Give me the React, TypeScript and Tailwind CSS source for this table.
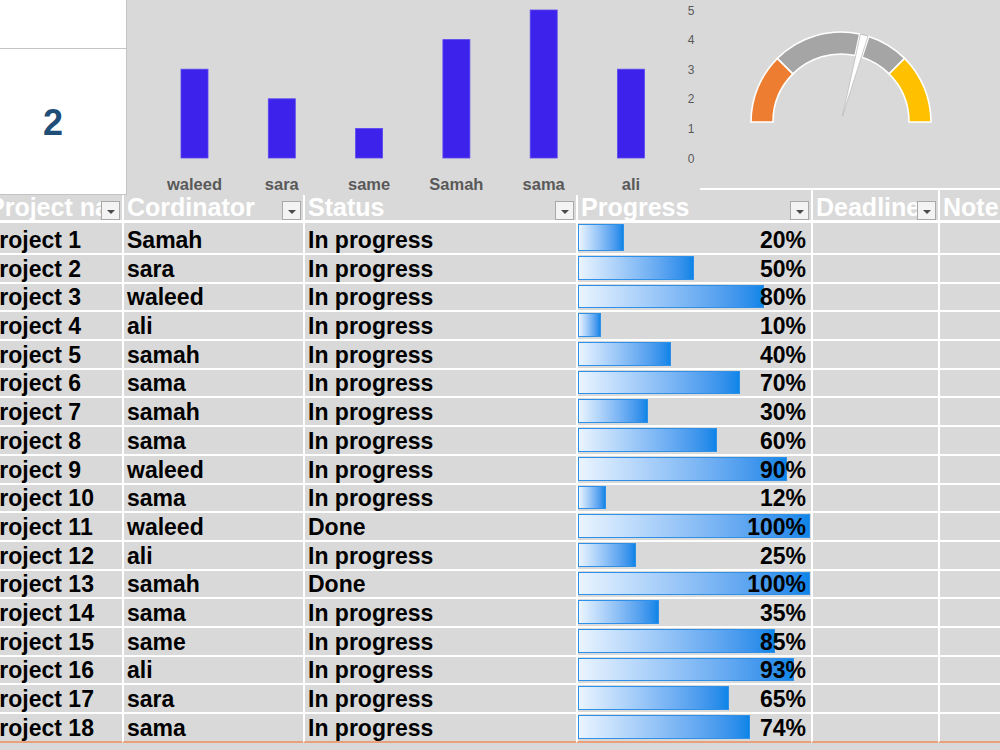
import React from "react";

type Row = { name: string; coord: string; status: string; p: number };

const rows: Row[] = [
  { name: "Project 1", coord: "Samah", status: "In progress", p: 20 },
  { name: "Project 2", coord: "sara", status: "In progress", p: 50 },
  { name: "Project 3", coord: "waleed", status: "In progress", p: 80 },
  { name: "Project 4", coord: "ali", status: "In progress", p: 10 },
  { name: "Project 5", coord: "samah", status: "In progress", p: 40 },
  { name: "Project 6", coord: "sama", status: "In progress", p: 70 },
  { name: "Project 7", coord: "samah", status: "In progress", p: 30 },
  { name: "Project 8", coord: "sama", status: "In progress", p: 60 },
  { name: "Project 9", coord: "waleed", status: "In progress", p: 90 },
  { name: "Project 10", coord: "sama", status: "In progress", p: 12 },
  { name: "Project 11", coord: "waleed", status: "Done", p: 100 },
  { name: "Project 12", coord: "ali", status: "In progress", p: 25 },
  { name: "Project 13", coord: "samah", status: "Done", p: 100 },
  { name: "Project 14", coord: "sama", status: "In progress", p: 35 },
  { name: "Project 15", coord: "same", status: "In progress", p: 85 },
  { name: "Project 16", coord: "ali", status: "In progress", p: 93 },
  { name: "Project 17", coord: "sara", status: "In progress", p: 65 },
  { name: "Project 18", coord: "sama", status: "In progress", p: 74 },
];

const chartData = [
  { label: "waleed", v: 3 },
  { label: "sara", v: 2 },
  { label: "same", v: 1 },
  { label: "Samah", v: 4 },
  { label: "sama", v: 5 },
  { label: "ali", v: 3 },
];

function BarChart() {
  const base = 158;
  const unit = 29.6;
  return (
    <svg width={573} height={195} viewBox="0 0 573 195" className="shrink-0">
      {chartData.map((d, i) => {
        const x = 54 + i * 87.3;
        const h = d.v * unit;
        return (
          <g key={d.label}>
            <rect x={x} y={base - h} width={27} height={h} fill="#3c22ea" stroke="#5a48f0" strokeWidth={0.8} />
            <text
              x={x + 13.5}
              y={190}
              textAnchor="middle"
              fontFamily="'Liberation Sans', Arial, sans-serif"
              fontWeight={700}
              fontSize={16.5}
              fill="#595959"
            >
              {d.label}
            </text>
          </g>
        );
      })}
      {[0, 1, 2, 3, 4, 5].map((n) => (
        <text
          key={n}
          x={564}
          y={base - n * unit + 4.5}
          textAnchor="middle"
          fontFamily="'Liberation Sans', Arial, sans-serif"
          fontSize={12}
          fill="#595959"
        >
          {n}
        </text>
      ))}
    </svg>
  );
}

function Gauge() {
  const cx = 141;
  const cy = 122;
  const R = 90;
  const r = 68;
  const pt = (rad: number, a: number) => {
    const t = (a * Math.PI) / 180;
    return `${(cx + rad * Math.cos(t)).toFixed(2)} ${(cy - rad * Math.sin(t)).toFixed(2)}`;
  };
  const seg = (a1: number, a2: number) =>
    `M ${pt(R, a1)} A ${R} ${R} 0 0 1 ${pt(R, a2)} L ${pt(r, a2)} A ${r} ${r} 0 0 0 ${pt(r, a1)} Z`;
  const t1 = (77.5 * Math.PI) / 180;
  const t2 = (72.5 * Math.PI) / 180;
  const needle = `M ${cx + 1.5} ${cy - 6} L ${(cx + R * Math.cos(t1)).toFixed(2)} ${(cy - R * Math.sin(t1)).toFixed(2)} L ${(cx + R * Math.cos(t2)).toFixed(2)} ${(cy - R * Math.sin(t2)).toFixed(2)} Z`;
  return (
    <svg width={300} height={188} viewBox="0 0 300 188">
      <path d={seg(180, 135)} fill="#ed7d31" stroke="#ffffff" strokeWidth={1.6} />
      <path d={seg(135, 78)} fill="#a5a5a5" stroke="#ffffff" strokeWidth={1.6} />
      <path d={seg(72, 45)} fill="#a5a5a5" stroke="#ffffff" strokeWidth={1.6} />
      <path d={seg(45, 0)} fill="#ffc000" stroke="#ffffff" strokeWidth={1.6} />
      <path d={needle} fill="#ffffff" stroke="#b8b8b8" strokeWidth={0.7} />
    </svg>
  );
}

function Drop() {
  return (
    <div className="w-[19px] h-[19px] mr-[2px] shrink-0 bg-[#f3f3f3] border border-[#a9a9a9] flex items-end justify-center pb-[5px]">
      <div className="w-0 h-0 border-l-[4px] border-r-[4px] border-t-[4px] border-l-transparent border-r-transparent border-t-[#4a4a4a]" />
    </div>
  );
}

const cols = "grid grid-cols-[122px_181px_273px_235px_127px_62px]";

function HeaderCell({ label, first, drop, shift }: { label: string; first?: boolean; drop?: boolean; shift?: boolean }) {
  return (
    <div className={`flex items-end overflow-hidden ${first ? "" : "border-l-2 border-white"}`}>
      <div className={`flex-1 min-w-0 overflow-hidden whitespace-nowrap text-white font-bold text-[25px] leading-[25px] ${shift ? "" : "pl-[3px]"}`}>
        <span className={shift ? "ml-[-12px]" : ""}>{label}</span>
      </div>
      {drop ? <Drop /> : null}
    </div>
  );
}

function DataRow({ row, index }: { row: Row; index: number }) {
  const last = index === rows.length - 1;
  const h = index === 0 ? "h-[32px]" : "h-[28.7px]";
  const bb = last ? "border-b-2 border-b-[#e9a17c]" : "border-b-2 border-b-white";
  const cell = `flex items-end overflow-hidden whitespace-nowrap ${bb}`;
  const txt = "text-[23px] leading-[26px] font-bold text-black";
  return (
    <div className={`${cols} ${h}`}>
      <div className={cell}>
        <span className={`${txt} ml-[-16px]`}>{row.name}</span>
      </div>
      <div className={`${cell} border-l-2 border-l-white pl-[3px]`}>
        <span className={txt}>{row.coord}</span>
      </div>
      <div className={`${cell} border-l-2 border-l-white pl-[3px]`}>
        <span className={txt}>{row.status}</span>
      </div>
      <div className={`${cell} border-l-2 border-l-white relative justify-end pr-[5px]`}>
        <div
          className="absolute left-0 top-[1px] bottom-[2px] bg-linear-to-r from-[#eaf4fe] to-[#0a85e8] border border-[#2e90e6]"
          style={{ width: `${(row.p * 2.32).toFixed(1)}px` }}
        />
        <span className={`${txt} relative`}>{row.p}%</span>
      </div>
      <div className={`${cell} border-l-2 border-l-white`} />
      <div className={`${cell} border-l-2 border-l-white`} />
    </div>
  );
}

export default function App() {
  return (
    <div className="w-[1000px] h-[750px] overflow-hidden bg-[#d9d9d9] font-['Liberation_Sans',Arial,sans-serif]">
      <div className="flex h-[195px]">
        <div className="w-[127px] shrink-0 bg-white border-r border-b border-[#c4c4c4] flex flex-col">
          <div className="h-[49px] border-b border-[#c4c4c4]" />
          <div className="flex-1 flex items-center justify-center pr-[20px] pt-[2px] text-[36px] font-bold text-[#1f4e79]">2</div>
        </div>
        <BarChart />
        <div className="flex-1 flex flex-col">
          <Gauge />
          <div className="flex-1 border-t-2 border-white flex">
            <div className="w-[111px]" />
            <div className="w-[127px] border-l-2 border-white" />
            <div className="flex-1 border-l-2 border-white" />
          </div>
        </div>
      </div>
      <div className={`${cols} h-[28px] border-b-[3px] border-white`}>
        <HeaderCell label="Project name" first drop shift />
        <HeaderCell label="Cordinator" drop />
        <HeaderCell label="Status" drop />
        <HeaderCell label="Progress" drop />
        <HeaderCell label="Deadline" drop />
        <HeaderCell label="Note" />
      </div>
      {rows.map((r, i) => (
        <DataRow key={r.name} row={r} index={i} />
      ))}
    </div>
  );
}
